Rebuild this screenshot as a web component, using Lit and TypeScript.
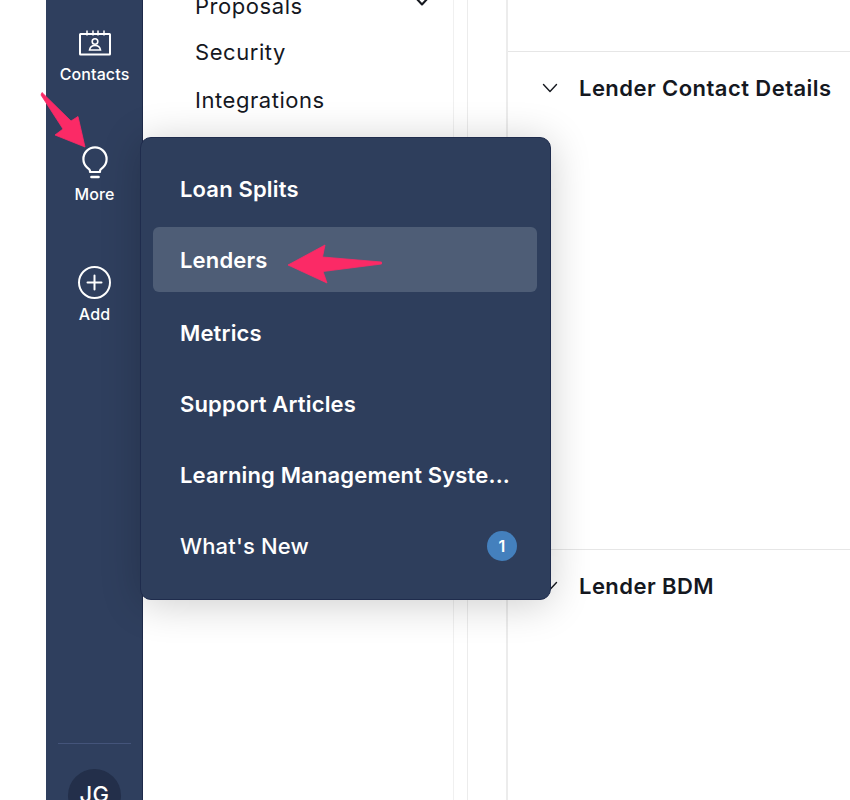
import { LitElement, html, css } from "lit";
import { customElement } from "lit/decorators.js";

const chevron = (cls: string) => html`<svg class=${cls} viewBox="0 0 16 10" fill="none" stroke="currentColor" stroke-linecap="round" stroke-linejoin="round"><path d="M1.5 1.5 8 8.5l6.5-7"/></svg>`;

@customElement("app-root")
export class AppRoot extends LitElement {
  static styles = css`
    :host { display: block; position: relative; width: 850px; height: 800px; overflow: hidden; background: #fff; font-family: Inter, "Liberation Sans", sans-serif; color: #15181f; }
    * { box-sizing: border-box; }
    .page { display: flex; height: 800px; padding-left: 46px; }
    .rail { width: 97px; flex: none; background: #2f3f5e; border-right: 1px solid #1e2a4a; display: flex; flex-direction: column; align-items: center; color: #fff; padding: 26px 0 0 1px; }
    .rail-item { height: 120px; display: flex; flex-direction: column; align-items: center; font-size: 16px; font-weight: 500; line-height: 20px; letter-spacing: 0.12px; flex: none; }
    .icon-box { height: 38px; display: flex; align-items: flex-start; justify-content: center; }
    .contacts svg { margin-top: 4px; }
    .rail-label { display: block; }
    .spacer { flex: 1; }
    .rule { width: 73px; height: 1px; background: #44547a; flex: none; }
    .avatar { width: 53px; height: 53px; border-radius: 50%; background: #232f4a; margin-top: 25px; margin-bottom: -22px; display: flex; justify-content: center; padding-top: 12px; font-size: 22px; font-weight: 500; line-height: 26px; letter-spacing: 0.5px; flex: none; }
    .subnav { width: 311px; flex: none; border-right: 1px solid #f0f0f0; padding: 0 22px 0 52px; font-size: 22px; line-height: 28px; letter-spacing: 0.55px; }
    .subnav-item { height: 48px; display: flex; align-items: center; justify-content: space-between; }
    .subnav-item.first { height: 45px; }
    .subnav-list { margin-top: -17px; }
    .sub-chev { width: 16px; height: 10px; stroke-width: 2.1; margin-top: -10px; margin-right: 1px; }
    .gutter { width: 14px; flex: none; border-right: 1px solid #ececec; background: #fff; }
    .column { width: 40px; flex: none; border-right: 2px solid #ececec; }
    .main { flex: 1; min-width: 0; }
    .top { height: 52px; border-bottom: 1px solid #e6e6e6; }
    .section { height: 498px; border-bottom: 1px solid #e6e6e6; padding: 21px 0 0 34px; }
    .section.last { border-bottom: 0; height: auto; padding-top: 21px; }
    .section-head { display: flex; align-items: center; gap: 21px; font-size: 22px; font-weight: 600; line-height: 30px; letter-spacing: 0.45px; white-space: nowrap; }
    .head-chev { width: 16px; height: 10px; stroke-width: 1.4; flex: none; }
    .menu { position: absolute; left: 140px; top: 137px; width: 411px; height: 463px; background: #2e3e5c; border: 1px solid #1f2c4d; border-radius: 11px; box-shadow: 0 4px 40px rgba(0, 0, 0, 0.2); padding: 15px 13px 15px 12px; color: #fff; display: flex; flex-direction: column; }
    .menu-item { height: 71px; flex: none; display: flex; align-items: center; justify-content: space-between; padding: 0 20px 0 27px; border-radius: 6px; font-size: 22px; font-weight: 600; line-height: 28px; letter-spacing: 0.16px; white-space: nowrap; }
    .menu-item.active { background: #4e5d76; height: 65px; margin: 3px 0 5px; }
    .menu-item.plain { font-weight: 500; }
    .badge { width: 30px; height: 30px; border-radius: 50%; background: #4480bd; font-size: 16px; font-weight: 600; display: flex; align-items: center; justify-content: center; }
    .arrows { position: absolute; left: 0; top: 0; width: 850px; height: 800px; pointer-events: none; }
  `;

  render() {
    const menu = ["Loan Splits", "Lenders", "Metrics", "Support Articles", "Learning Management Syste..."];
    return html`
      <div class="page">
        <nav class="rail">
          <div class="rail-item contacts">
            <div class="icon-box">
              <svg width="34" height="26" viewBox="0 0 34 26" fill="none" stroke="#fff" stroke-width="2">
                <rect x="2" y="4" width="30" height="20.500" rx="0.5" />
                <path d="M9 0.500v5M15 0.500v5M20 0.500v5M26 0.500v5" stroke-width="1.500" />
                <circle cx="17" cy="11.500" r="2.800" stroke-width="1.600" />
                <path d="M11.500 20c.5-3.300 2.600-4.500 5.500-4.500s5 1.200 5.500 4.500z" stroke-width="1.600" />
              </svg>
            </div>
            <span class="rail-label">Contacts</span>
          </div>
          <div class="rail-item more">
            <div class="icon-box">
              <svg width="28" height="34" viewBox="0 0 28 34" fill="none" stroke="#fff" stroke-width="2.200" stroke-linecap="round" stroke-linejoin="round">
                <path d="M9 26v-1.200c0-1.300-1.500-2.300-3-3.400a11.600 11.600 0 1 1 16 0c-1.500 1.100-3 2.100-3 3.400V26z" />
                <path d="M10.500 31h7" stroke-width="2.600" />
              </svg>
            </div>
            <span class="rail-label">More</span>
          </div>
          <div class="rail-item add">
            <div class="icon-box">
              <svg width="33" height="33" viewBox="0 0 33 33" fill="none" stroke="#fff" stroke-width="2">
                <circle cx="16.500" cy="16.500" r="15.500" />
                <path d="M16.500 9.500v14M9.500 16.500h14" stroke-linecap="round" />
              </svg>
            </div>
            <span class="rail-label">Add</span>
          </div>
          <div class="spacer"></div>
          <div class="rule"></div>
          <div class="avatar">JG</div>
        </nav>
        <aside class="subnav">
          <div class="subnav-list">
            <div class="subnav-item first"><span>Proposals</span>${chevron("sub-chev")}</div>
            <div class="subnav-item"><span>Security</span></div>
            <div class="subnav-item"><span>Integrations</span></div>
          </div>
        </aside>
        <div class="gutter"></div>
        <div class="column"></div>
        <main class="main">
          <div class="top"></div>
          <section class="section">
            <div class="section-head">${chevron("head-chev")}<span>Lender Contact Details</span></div>
          </section>
          <section class="section last">
            <div class="section-head">${chevron("head-chev")}<span>Lender BDM</span></div>
          </section>
        </main>
      </div>
      <div class="menu">
        ${menu.map((m, i) => html`<div class="menu-item ${i === 1 ? "active" : ""}">${m}</div>`)}
        <div class="menu-item plain"><span>What's New</span><span class="badge">1</span></div>
      </div>
      <svg class="arrows" viewBox="0 0 850 800">
        <path fill="#fb2a66" stroke="#fb2a66" stroke-width="0.800" stroke-linejoin="round" d="M42 92.500 71 121 78 116.500 85 147 55 135 63 129 41 95z" />
        <path fill="#fb2a66" stroke="#fb2a66" stroke-width="0.800" stroke-linejoin="round" d="M288 265 325 245 322.500 257 381.500 262 381.500 264 323 271.500 327 283z" />
      </svg>
    `;
  }
}
